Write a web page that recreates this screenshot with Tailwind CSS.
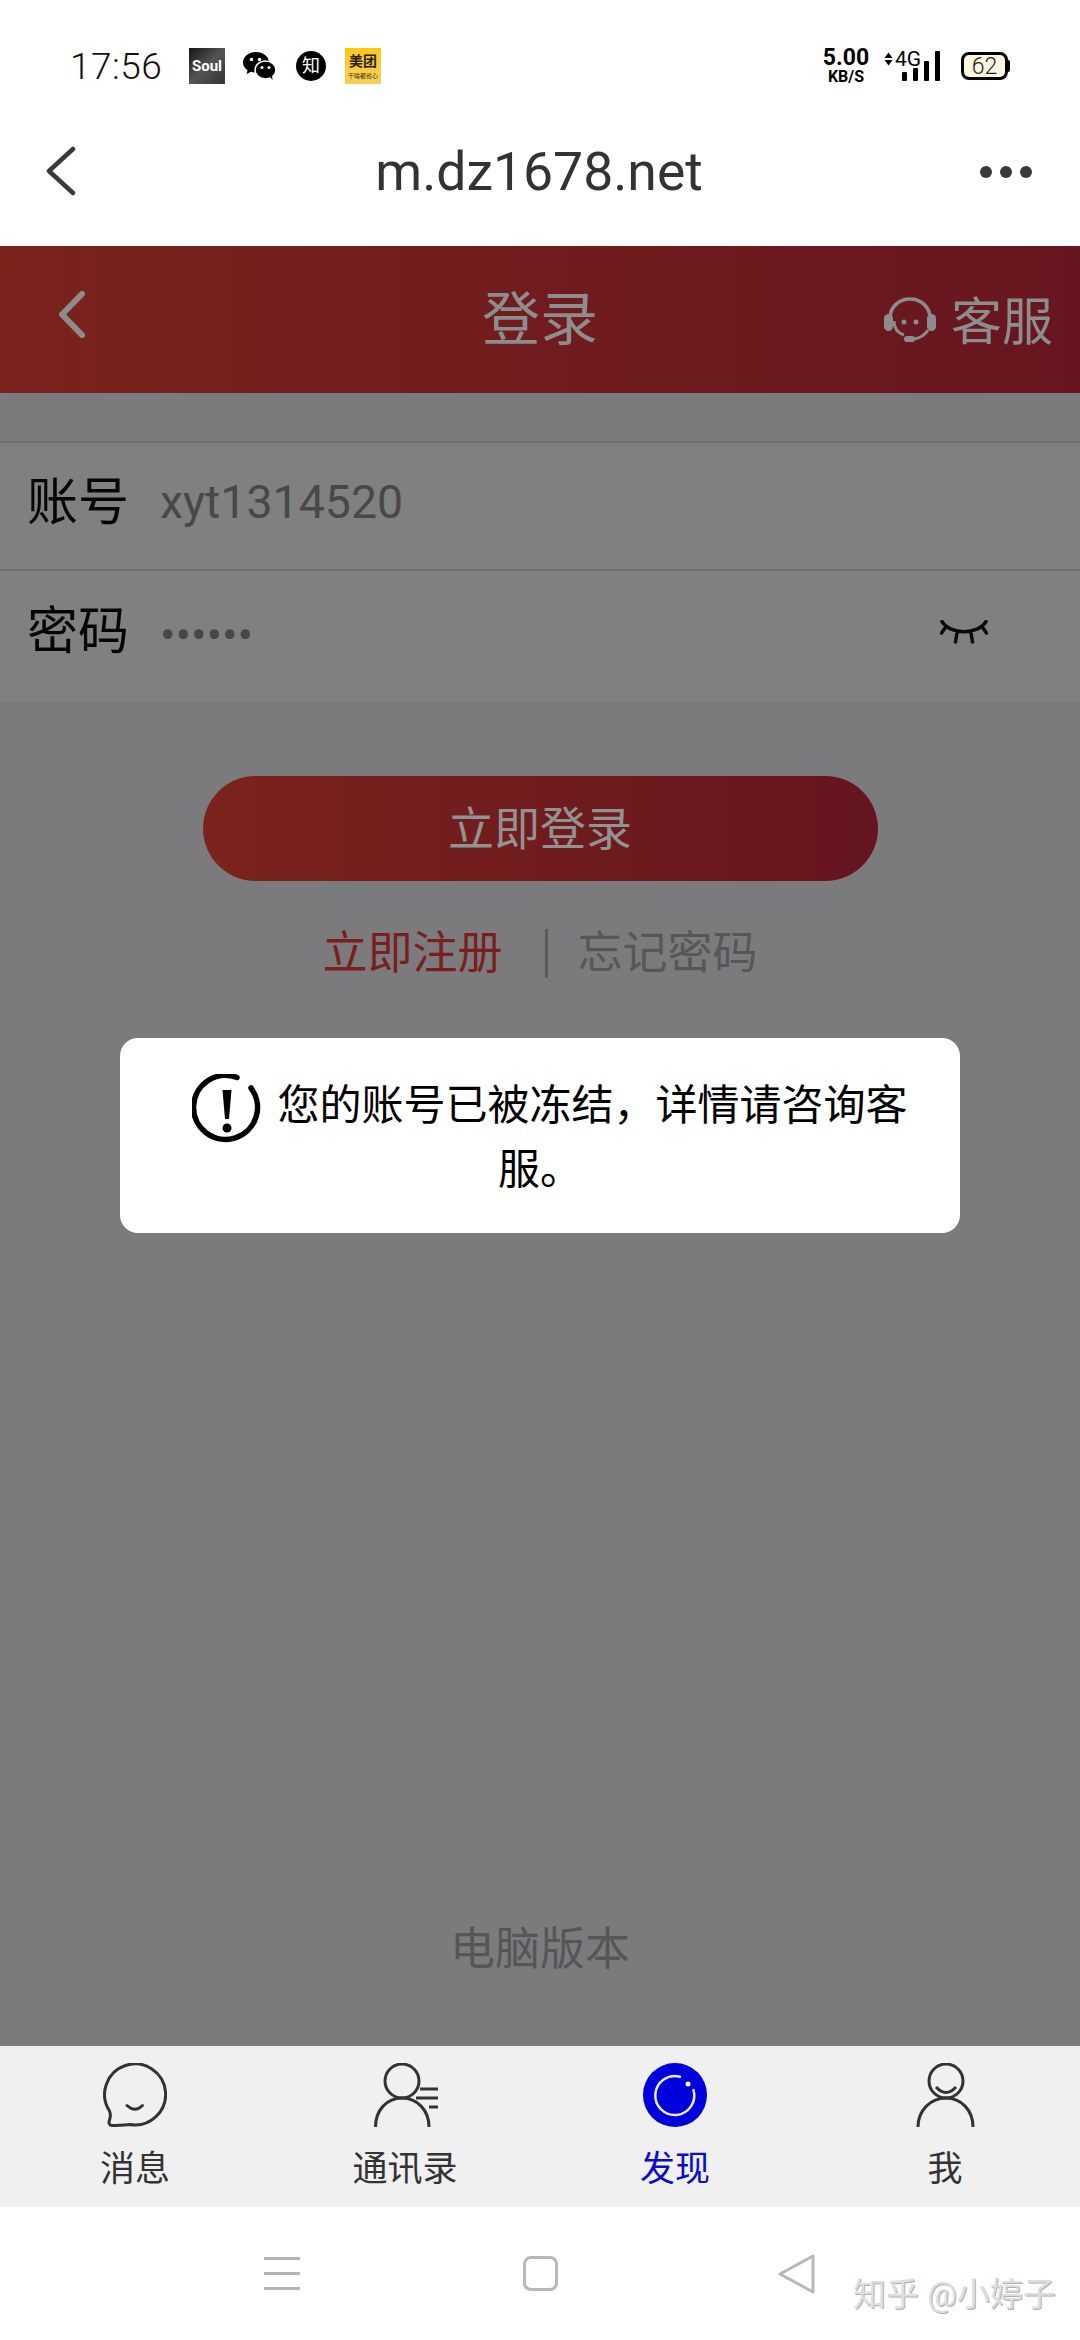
<!DOCTYPE html>
<html lang="zh-CN">
<head>
    <meta charset="UTF-8">
    <meta name="viewport" content="width=device-width, initial-scale=1.0">
    <title>登录</title>
    <script src="https://cdn.jsdelivr.net/npm/@tailwindcss/browser@4"></script>
</head>
<body class="bg-white font-['Roboto','Noto_Sans_CJK_SC',sans-serif]">
    <div class="relative w-[1080px] h-[2340px] flex flex-col overflow-hidden">

        <!-- Status bar -->
        <div class="h-[96px] pt-[36px] pl-[70px] pr-[70px] flex items-center justify-between bg-white shrink-0">
            <div class="flex items-center">
                <span class="w-[92px] text-[37px] leading-none font-light text-[#111] tracking-[0.5px]">17:56</span>
                <div class="ml-[27px] w-[36px] h-[36px] bg-gradient-to-br from-[#161616] via-[#555] to-[#333] flex items-center justify-center text-[15px] font-bold text-white leading-none">Soul</div>
                <svg class="ml-[18px]" width="33" height="28" viewBox="0 0 33 28">
                    <path d="M13 0C6 0 0 4.500 0 10.500C0 14 2 16.500 4.500 18.300L3.500 22L8 19.800C9.500 20.300 11 20.500 12 20.500C20 20 26 15 26 10.500C26 4.500 20 0 13 0Z" fill="#000"/>
                    <ellipse cx="22.500" cy="18" rx="10.500" ry="9" fill="#000" stroke="#fff" stroke-width="1.500"/>
                    <path d="M27 25L29.500 28L29 23Z" fill="#000"/>
                    <circle cx="8.500" cy="7.500" r="1.700" fill="#fff"/><circle cx="16.500" cy="7.500" r="1.700" fill="#fff"/>
                    <circle cx="19" cy="15.500" r="1.500" fill="#fff"/><circle cx="26" cy="15.500" r="1.500" fill="#fff"/>
                </svg>
                <div class="ml-[20px] w-[30px] h-[30px] rounded-full bg-black flex items-center justify-center text-[18px] text-white leading-none">知</div>
                <div class="ml-[19px] w-[36px] h-[36px] bg-gradient-to-b from-[#fdc70c] to-[#f5cf5c] flex flex-col items-center pt-[3px]">
                    <span class="text-[14px] leading-[20px] font-bold text-[#2a1f00]">美团</span>
                    <span class="text-[6px] leading-[8px] text-[#3a2c00] mt-[1px] whitespace-nowrap">干啥都省心</span>
                </div>
            </div>
            <div class="flex items-center">
                <div class="w-[48px] flex flex-col items-center text-black font-bold leading-none">
                    <span class="text-[23px] leading-[18px]">5.00</span>
                    <span class="text-[16px] leading-[14px] mt-[3px]">KB/S</span>
                </div>
                <div class="relative ml-[14px] w-[56px] h-[30px]">
                    <svg class="absolute left-0 top-0" width="56" height="30" viewBox="0 0 56 30">
                        <path d="M0.500 7L4.500 1.500L8.500 7ZM0.500 9L4.500 14.500L8.500 9Z" fill="#000"/>
                        <rect x="18" y="21" width="5" height="9" rx="1" fill="#000"/>
                        <rect x="29" y="17" width="5" height="13" rx="1" fill="#000"/>
                        <rect x="40" y="10" width="5" height="20" rx="1" fill="#000"/>
                        <rect x="51" y="0" width="5" height="30" rx="1" fill="#000"/>
                    </svg>
                    <span class="absolute left-[11px] top-[-2px] text-[21px] leading-[20px] text-black">4G</span>
                </div>
                <div class="ml-[21px] relative w-[49px] h-[28px]">
                    <div class="w-[47px] h-[28px] rounded-[8px] border-[3px] border-black bg-[#fdf6e3] flex items-center justify-center text-[23px] leading-none text-[#222] font-light">62</div>
                    <div class="absolute right-0 top-[8px] w-[3px] h-[12px] rounded-r-[2px] bg-black"></div>
                </div>
            </div>
        </div>

        <!-- Browser title bar -->
        <div class="h-[150px] pl-[46px] pr-[48px] pt-[2px] grid grid-cols-[1fr_auto_1fr] items-center bg-white shrink-0">
            <svg class="-mt-[2px]" width="30" height="50" viewBox="0 0 30 50" fill="none" stroke="#3a3a3a" stroke-width="4.500" stroke-linecap="round" stroke-linejoin="round">
                <path d="M27 3L3 25L27 47"/>
            </svg>
            <span class="text-[53.500px] leading-none text-[#333]">m.dz1678.net</span>
            <div class="flex gap-[8px] justify-end">
                <span class="w-[12px] h-[12px] rounded-full bg-[#3a3a3a]"></span>
                <span class="w-[12px] h-[12px] rounded-full bg-[#3a3a3a]"></span>
                <span class="w-[12px] h-[12px] rounded-full bg-[#3a3a3a]"></span>
            </div>
        </div>

        <!-- Red header -->
        <div class="h-[147px] px-[27px] grid grid-cols-[1fr_auto_1fr] items-center bg-gradient-to-r from-[#7a231d] to-[#67161f] shrink-0">
            <svg class="ml-[31px] mb-[10px]" width="27" height="47" viewBox="0 0 27 47" fill="none" stroke="#8c8c8c" stroke-width="6" stroke-linecap="round" stroke-linejoin="round">
                <path d="M24 3L4 23.500L24 44"/>
            </svg>
            <span class="text-[58px] leading-none text-[#8d8d8d]">登录</span>
            <div class="flex items-center justify-end gap-[15px] text-[#8d8d8d] pt-[6px]">
                <svg class="-mt-[5px]" width="52" height="46" viewBox="0 0 52 46" fill="none">
                    <path d="M6 24V21C6 10 15 2 26 2C37 2 46 10 46 21V24" stroke="#8c8c8c" stroke-width="3.500"/>
                    <rect x="0" y="17" width="9" height="17" rx="4.500" fill="#8c8c8c"/>
                    <rect x="43" y="17" width="9" height="17" rx="4.500" fill="#8c8c8c"/>
                    <path d="M10 24C10 31 14 36 20 38M44 33C41 38 36 41 30 42" stroke="#8c8c8c" stroke-width="3"/>
                    <rect x="20" y="39" width="11" height="6" rx="3" fill="#8c8c8c"/>
                    <circle cx="20" cy="25" r="2.500" fill="#8c8c8c"/><circle cx="32" cy="25" r="2.500" fill="#8c8c8c"/>
                </svg>
                <span class="text-[51px] leading-none">客服</span>
            </div>
        </div>

        <!-- Login page (dimmed) -->
        <div class="flex-1 flex flex-col bg-[#7b7b7d]">
            <div class="mt-[48px] border-t-2 border-[#6f6f70] bg-[#808080]">
                <div class="h-[128px] pl-[27px] pb-[8px] flex items-center border-b-2 border-[#6f6f70]">
                    <span class="w-[133px] text-[51px] leading-none text-[#050505]">账号</span>
                    <span class="text-[46.500px] leading-none text-[#484848]">xyt1314520</span>
                </div>
                <div class="h-[131px] pl-[27px] pr-[92px] pb-[10px] flex items-center">
                    <span class="w-[133px] text-[51px] leading-none text-[#050505]">密码</span>
                    <span class="flex-1 text-[46px] leading-none text-[#484848] pt-[6px]">••••••</span>
                    <svg width="48" height="24" viewBox="0 0 48 24" fill="none" stroke="#0a0a0a" stroke-width="3.500" stroke-linecap="round">
                        <path d="M2 1.500C10 15 38 15 46 1.500M5 8L1.500 13M43 8L46.500 13M17 13L15.500 22M31 13L32.500 22"/>
                    </svg>
                </div>
            </div>

            <button class="mt-[74px] mx-auto w-[675px] h-[105px] rounded-full bg-gradient-to-r from-[#7b231c] to-[#65151f] text-[46px] leading-none text-[#929292]">立即登录</button>

            <div class="mt-[47px] flex items-center justify-center h-[50px] text-[45px] leading-none">
                <span class="text-[#7a1f1d]">立即注册</span>
                <span class="ml-[42px] mr-[30px] w-[3px] h-[49px] bg-[#5b5b5b]"></span>
                <span class="text-[#575757]">忘记密码</span>
            </div>

            <div class="mt-auto mb-[74px] text-center text-[45px] leading-none text-[#565656]">电脑版本</div>
        </div>

        <!-- Tab bar -->
        <div class="h-[161px] grid grid-cols-4 bg-[#f0f0f0] shrink-0 text-[35px] leading-[35px] text-[#333]">
            <div class="flex flex-col items-center pt-[17px]">
                <svg width="64" height="64" viewBox="0 0 64 64" fill="none" stroke="#333" stroke-width="3">
                    <path d="M6.500 48A30.500 30.500 0 1 1 27 61.500C21 62 15 62.500 9.500 62.500C6 62.500 5.500 60 6.500 57C7.500 54 8 51.500 6.500 48Z"/>
                    <path d="M24 42.500Q32 50 39.500 42.500" stroke-linecap="round"/>
                </svg>
                <span class="mt-[25px]">消息</span>
            </div>
            <div class="flex flex-col items-center pt-[17px]">
                <svg width="70" height="64" viewBox="0 0 70 64" fill="none" stroke="#333" stroke-width="3">
                    <circle cx="32" cy="18" r="17"/>
                    <path d="M5.500 64C5.500 47 17 35 32 35C47 35 59 47 59 64"/>
                    <path d="M50 26H68M46 35H68M59 44H68"/>
                </svg>
                <span class="mt-[25px]">通讯录</span>
            </div>
            <div class="flex flex-col items-center pt-[17px] text-[#0b0bcc]">
                <svg width="64" height="64" viewBox="0 0 64 64" fill="none">
                    <circle cx="32" cy="32" r="32" fill="#0000dc"/>
                    <path d="M37 13.700A19.500 19.500 0 1 0 50.500 27" stroke="#e8e8ff" stroke-width="2.500" stroke-linecap="round"/>
                    <circle cx="45" cy="21" r="2.500" fill="#fff"/>
                </svg>
                <span class="mt-[25px]">发现</span>
            </div>
            <div class="flex flex-col items-center pt-[17px]">
                <svg width="64" height="64" viewBox="0 0 64 64" fill="none" stroke="#333" stroke-width="3">
                    <circle cx="33" cy="18" r="17"/>
                    <path d="M23 24Q33 35 43 24"/>
                    <path d="M5 64C5 47 18 35 33 35C48 35 60 47 60 64"/>
                </svg>
                <span class="mt-[25px]">我</span>
            </div>
        </div>

        <!-- Android nav bar -->
        <div class="h-[133px] pl-[264px] flex items-center bg-white shrink-0">
            <div class="w-[36px] flex flex-col gap-[12px]">
                <span class="h-[3px] bg-[#b4b4b4]"></span>
                <span class="h-[3px] bg-[#b4b4b4]"></span>
                <span class="h-[3px] bg-[#b4b4b4]"></span>
            </div>
            <div class="ml-[223px] w-[35px] h-[35px] rounded-[8px] border-[3px] border-[#b8b8b8]"></div>
            <svg class="ml-[220px]" width="37" height="40" viewBox="0 0 37 40" fill="none" stroke="#b8b8b8" stroke-width="3" stroke-linejoin="round">
                <path d="M2 20L35 2V38Z"/>
            </svg>
        </div>

        <!-- Alert dialog, floats over the page -->
        <div class="absolute left-[120px] top-[1038px] w-[840px] h-[195px] rounded-[18px] bg-white px-[40px] pt-[36px] text-center text-[42px] leading-[64px] text-black">
            <svg class="inline-block align-middle -my-[10px] ml-[20px] mr-[15px]" width="70" height="70" viewBox="0 0 70 70" fill="none">
                <path d="M45 3.500A32 32 0 1 0 59 14" stroke="#000" stroke-width="5.500" stroke-linecap="round"/>
                <path d="M30.500 16H39.500L37 45H33Z" fill="#000"/>
                <circle cx="35" cy="54" r="4.500" fill="#000"/>
            </svg>您的账号已被冻结&#xFF0C;详情请咨询客服&#x3002;
        </div>

        <!-- Watermark -->
        <div class="absolute left-[853px] top-[2277px] text-[33px] leading-[36px] text-[#dedede] whitespace-nowrap [text-shadow:1px_1px_0_#b0b0b0]">知乎 @小婷子</div>
    </div>
</body>
</html>
